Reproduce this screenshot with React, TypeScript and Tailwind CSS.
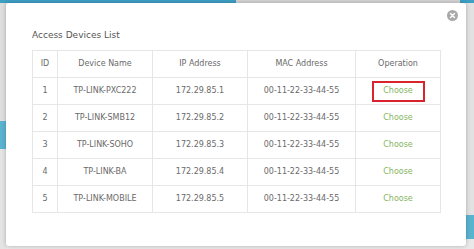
import React from 'react';

const rows = [
    { id: 1, name: 'TP-LINK-PXC222', ip: '172.29.85.1' },
    { id: 2, name: 'TP-LINK-SMB12', ip: '172.29.85.2' },
    { id: 3, name: 'TP-LINK-SOHO', ip: '172.29.85.3' },
    { id: 4, name: 'TP-LINK-BA', ip: '172.29.85.4' },
    { id: 5, name: 'TP-LINK-MOBILE', ip: '172.29.85.5' },
];

const cell = 'border border-[#e6e6e6] text-center font-normal p-0';

const App: React.FC = () => {
    return (
        <div className="relative w-[474px] h-[249px] overflow-hidden bg-[#e9e9e9]" style={{ fontFamily: '"DejaVu Sans", Verdana, sans-serif' }}>
            {/* page behind the dialog */}
            <div className="flex h-[3px]">
                <div className="w-[236px] bg-[#3d9fc4]" />
                <div className="flex-1 bg-[#d4d4d4]" />
                <div className="w-[14px] bg-[#3d9fc4]" />
            </div>
            <div className="flex justify-between">
                <div className="w-[6px] flex flex-col">
                    <div className="h-[118px] bg-[#dedede]" />
                    <div className="h-[28px] bg-[#5bb3cf]" />
                    <div className="h-[100px] bg-[#e4e4e4]" />
                </div>
                <div className="w-[8px] flex flex-col">
                    <div className="h-[212px] bg-[#e2e2e2]" />
                    <div className="h-[24px] bg-[#5bb3cf]" />
                </div>
            </div>

            {/* dialog */}
            <div className="absolute left-[6px] top-[3px] w-[460px] h-[243px] bg-white rounded-[3px] shadow-[0_0_4px_rgba(0,0,0,0.25)]">
                <button className="absolute right-[8px] top-[7px] w-[11px] h-[11px] rounded-full bg-[#a9a9a9] flex items-center justify-center">
                    <svg width="7" height="7" viewBox="0 0 7 7">
                        <path d="M1.5 1.5L5.5 5.5M5.5 1.5L1.5 5.5" stroke="#fff" strokeWidth="1.4" strokeLinecap="round" />
                    </svg>
                </button>
                <h2 className="absolute left-[26px] top-[27px] text-[9px] leading-[11px] text-[#555]">Access Devices List</h2>
                <table className="absolute left-[26px] top-[47px] w-[408px] border-collapse text-[8px] text-[#6a6a6a] table-fixed">
                    <colgroup>
                        <col className="w-[25px]" />
                        <col className="w-[95px]" />
                        <col className="w-[95px]" />
                        <col className="w-[108px]" />
                        <col className="w-[85px]" />
                    </colgroup>
                    <thead>
                        <tr className="h-[27px]">
                            <th className={cell}>ID</th>
                            <th className={cell}>Device Name</th>
                            <th className={cell}>IP Address</th>
                            <th className={cell}>MAC Address</th>
                            <th className={cell}>Operation</th>
                        </tr>
                    </thead>
                    <tbody>
                        {rows.map((r) => (
                            <tr key={r.id} className="h-[27px]">
                                <td className={cell}>{r.id}</td>
                                <td className={cell}>{r.name}</td>
                                <td className={cell}>{r.ip}</td>
                                <td className={cell}>00-11-22-33-44-55</td>
                                <td className={cell}>
                                    {r.id === 1 ? (
                                        <span className="inline-flex items-center justify-center w-[53px] h-[21px] border-2 border-[#d9232e] text-[#86b55f]">Choose</span>
                                    ) : (
                                        <span className="text-[#86b55f]">Choose</span>
                                    )}
                                </td>
                            </tr>
                        ))}
                    </tbody>
                </table>
            </div>
        </div>
    );
};

export default App;
